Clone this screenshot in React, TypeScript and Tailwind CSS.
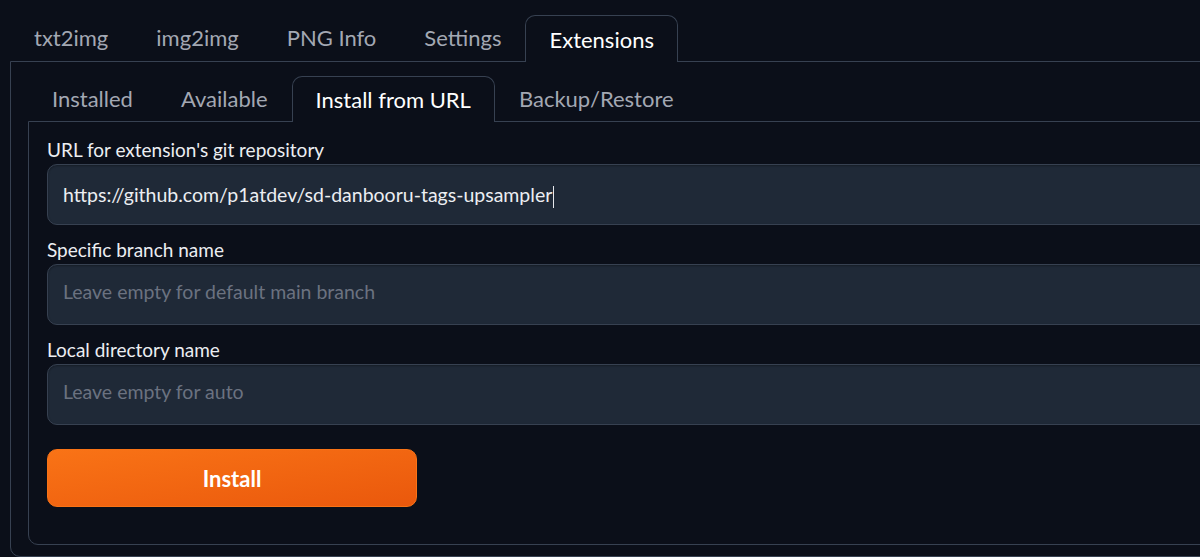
import * as React from 'react';

const FONT = { fontFamily: '"Lato", "Noto Sans", sans-serif' };

function TabButton({ label, active, size }: { label: string; active?: boolean; size: 'lg' | 'md' }) {
  const height = size === 'lg' ? 'h-[47px]' : 'h-[46px]';
  if (active) {
    return (
      <div
        className={`${height} text-[22px] relative z-10 -mb-px flex items-center px-[23px] rounded-t-[10px] border border-b-0 border-[#374151] bg-[#0b0f19] text-white`}
      >
        {label}
      </div>
    );
  }
  return (
    <div className={`${height} text-[22px] flex items-center px-[24px] text-[#a3a8b3]`}>{label}</div>
  );
}

function Field({ label, value, placeholder, caret }: { label: string; value?: string; placeholder?: string; caret?: boolean }) {
  return (
    <div className="flex flex-col gap-[3px]">
      <p className="text-[19px] leading-[22px] text-[#eceef2]">{label}</p>
      <div className="h-[61px] rounded-[10px] border border-[#374151] bg-[#1f2937] flex items-center px-[15px] text-[19.5px] shadow-[inset_0_1px_2px_rgba(0,0,0,0.3)]">
        {value ? (
          <span className="text-[#eceef2]">
            {value}
            {caret && <span className="inline-block w-px h-[22px] bg-[#e5e7eb] align-middle ml-px" />}
          </span>
        ) : (
          <span className="text-[#6b7280] -mt-[6px]">{placeholder}</span>
        )}
      </div>
    </div>
  );
}

export default function App() {
  return (
    <div className="w-[1200px] h-[557px] overflow-hidden bg-[#0b0f19]" style={FONT}>
      <div className="w-[1400px] ml-[10px] pt-[14px]">
        {/* Top tabs */}
        <div className="flex items-end">
          <TabButton size="lg" label="txt2img" />
          <TabButton size="lg" label="img2img" />
          <TabButton size="lg" label="PNG Info" />
          <TabButton size="lg" label="Settings" />
          <TabButton size="lg" label="Extensions" active />
        </div>

        {/* Outer panel */}
        <div className="border border-[#374151] rounded-b-[10px] h-[496px] pt-[13px] pl-[17px]">
          {/* Sub tabs */}
          <div className="flex items-end">
            <TabButton size="md" label="Installed" />
            <TabButton size="md" label="Available" />
            <TabButton size="md" label="Install from URL" active />
            <TabButton size="md" label="Backup/Restore" />
          </div>

          {/* Inner panel */}
          <div className="border border-[#374151] rounded-b-[10px] h-[424px] pt-[17px] pl-[18px] flex flex-col gap-[14px]">
            <Field label="URL for extension's git repository" value="https://github.com/p1atdev/sd-danbooru-tags-upsampler" caret />
            <Field label="Specific branch name" placeholder="Leave empty for default main branch" />
            <Field label="Local directory name" placeholder="Leave empty for auto" />
            <div className="pt-[10px]">
              <button className="w-[370px] h-[58px] rounded-[10px] border border-[#f97316] bg-gradient-to-br from-[#f97316] to-[#ea580c] text-white text-[22px] font-bold">
                Install
              </button>
            </div>
          </div>
        </div>
      </div>
    </div>
  );
}
